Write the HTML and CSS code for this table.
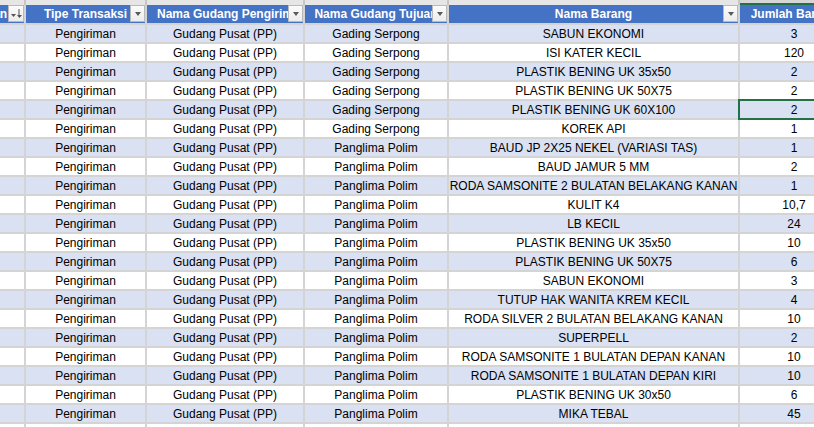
FILE: index.html
```html
<!DOCTYPE html>
<html>
<head>
<meta charset="utf-8">
<link rel="stylesheet" href="styles.css">
</head>
<body>
<div class="sheet">
  <div class="colhdr">
    <div></div><div></div><div></div><div></div><div></div><div class="sel"></div>
  </div>
  <div class="grid">
    <div class="th th-a"><span class="th-end">Tanggal Pengiriman</span>
      <span class="fbtn fbtn-sort"><svg width="14" height="15" viewBox="0 0 14 15"><path d="M2 8h5l-2.5 3z" fill="#555"/><path d="M10 3v8" stroke="#555" stroke-width="1"/><path d="M8 9h5l-2.5 3z" fill="#555"/></svg></span></div>
    <div class="th"><span>Tipe Transaksi</span><span class="fbtn"><i></i></span></div>
    <div class="th"><span>Nama Gudang Pengirim</span><span class="fbtn"><i></i></span></div>
    <div class="th"><span>Nama Gudang Tujuan</span><span class="fbtn"><i></i></span></div>
    <div class="th"><span>Nama Barang</span><span class="fbtn"><i></i></span></div>
    <div class="th"><span>Jumlah Barang</span><span class="fbtn"><i></i></span></div>

    <div class="c b"></div><div class="c b">Pengiriman</div><div class="c b">Gudang Pusat (PP)</div><div class="c b">Gading Serpong</div><div class="c b">SABUN EKONOMI</div><div class="c b">3</div>
    <div class="c"></div><div class="c">Pengiriman</div><div class="c">Gudang Pusat (PP)</div><div class="c">Gading Serpong</div><div class="c">ISI KATER KECIL</div><div class="c">120</div>
    <div class="c b"></div><div class="c b">Pengiriman</div><div class="c b">Gudang Pusat (PP)</div><div class="c b">Gading Serpong</div><div class="c b">PLASTIK BENING UK 35x50</div><div class="c b">2</div>
    <div class="c"></div><div class="c">Pengiriman</div><div class="c">Gudang Pusat (PP)</div><div class="c">Gading Serpong</div><div class="c">PLASTIK BENING UK 50X75</div><div class="c">2</div>
    <div class="c b"></div><div class="c b">Pengiriman</div><div class="c b">Gudang Pusat (PP)</div><div class="c b">Gading Serpong</div><div class="c b">PLASTIK BENING UK 60X100</div><div class="c b">2</div>
    <div class="c"></div><div class="c">Pengiriman</div><div class="c">Gudang Pusat (PP)</div><div class="c">Gading Serpong</div><div class="c">KOREK API</div><div class="c">1</div>
    <div class="c b"></div><div class="c b">Pengiriman</div><div class="c b">Gudang Pusat (PP)</div><div class="c b">Panglima Polim</div><div class="c b">BAUD JP 2X25 NEKEL (VARIASI TAS)</div><div class="c b">1</div>
    <div class="c"></div><div class="c">Pengiriman</div><div class="c">Gudang Pusat (PP)</div><div class="c">Panglima Polim</div><div class="c">BAUD JAMUR 5 MM</div><div class="c">2</div>
    <div class="c b"></div><div class="c b">Pengiriman</div><div class="c b">Gudang Pusat (PP)</div><div class="c b">Panglima Polim</div><div class="c b">RODA SAMSONITE 2 BULATAN BELAKANG KANAN</div><div class="c b">1</div>
    <div class="c"></div><div class="c">Pengiriman</div><div class="c">Gudang Pusat (PP)</div><div class="c">Panglima Polim</div><div class="c">KULIT K4</div><div class="c">10,7</div>
    <div class="c b"></div><div class="c b">Pengiriman</div><div class="c b">Gudang Pusat (PP)</div><div class="c b">Panglima Polim</div><div class="c b">LB KECIL</div><div class="c b">24</div>
    <div class="c"></div><div class="c">Pengiriman</div><div class="c">Gudang Pusat (PP)</div><div class="c">Panglima Polim</div><div class="c">PLASTIK BENING UK 35x50</div><div class="c">10</div>
    <div class="c b"></div><div class="c b">Pengiriman</div><div class="c b">Gudang Pusat (PP)</div><div class="c b">Panglima Polim</div><div class="c b">PLASTIK BENING UK 50X75</div><div class="c b">6</div>
    <div class="c"></div><div class="c">Pengiriman</div><div class="c">Gudang Pusat (PP)</div><div class="c">Panglima Polim</div><div class="c">SABUN EKONOMI</div><div class="c">3</div>
    <div class="c b"></div><div class="c b">Pengiriman</div><div class="c b">Gudang Pusat (PP)</div><div class="c b">Panglima Polim</div><div class="c b">TUTUP HAK WANITA KREM KECIL</div><div class="c b">4</div>
    <div class="c"></div><div class="c">Pengiriman</div><div class="c">Gudang Pusat (PP)</div><div class="c">Panglima Polim</div><div class="c">RODA SILVER 2 BULATAN BELAKANG KANAN</div><div class="c">10</div>
    <div class="c b"></div><div class="c b">Pengiriman</div><div class="c b">Gudang Pusat (PP)</div><div class="c b">Panglima Polim</div><div class="c b">SUPERPELL</div><div class="c b">2</div>
    <div class="c"></div><div class="c">Pengiriman</div><div class="c">Gudang Pusat (PP)</div><div class="c">Panglima Polim</div><div class="c">RODA SAMSONITE 1 BULATAN DEPAN KANAN</div><div class="c">10</div>
    <div class="c b"></div><div class="c b">Pengiriman</div><div class="c b">Gudang Pusat (PP)</div><div class="c b">Panglima Polim</div><div class="c b">RODA SAMSONITE 1 BULATAN DEPAN KIRI</div><div class="c b">10</div>
    <div class="c"></div><div class="c">Pengiriman</div><div class="c">Gudang Pusat (PP)</div><div class="c">Panglima Polim</div><div class="c">PLASTIK BENING UK 30x50</div><div class="c">6</div>
    <div class="c b"></div><div class="c b">Pengiriman</div><div class="c b">Gudang Pusat (PP)</div><div class="c b">Panglima Polim</div><div class="c b">MIKA TEBAL</div><div class="c b">45</div>
    <div class="c"></div><div class="c"></div><div class="c"></div><div class="c"></div><div class="c"></div><div class="c"></div>

    <div class="selbox"></div>
  </div>
</div>
</body>
</html>
```

FILE: styles.css
```css
html, body {
  margin: 0;
  padding: 0;
  background: #ffffff;
  overflow: hidden;
}
body {
  width: 814px;
  height: 427px;
  font-family: "Liberation Sans", Arial, sans-serif;
}
.sheet {
  width: 848px;
}
.colhdr {
  display: grid;
  grid-template-columns: 24px 119px 156px 142px 289px 108px;
  column-gap: 2px;
  height: 5px;
  background: #c6c6c6;
}
.colhdr div {
  background: #e6e6e6;
}
.colhdr .sel {
  background: #d6d6d6;
  border-bottom: 2px solid #217346;
}
.grid {
  position: relative;
  display: grid;
  grid-template-columns: 24px 119px 156px 142px 289px 108px;
  grid-template-rows: 18px;
  grid-auto-rows: 17px;
  gap: 2px;
  background: #d4d4d4;
}
.th {
  position: relative;
  background: #4472c4;
  color: #ffffff;
  font-weight: bold;
  font-size: 12px;
  line-height: 18px;
  white-space: nowrap;
  overflow: hidden;
  display: flex;
  justify-content: center;
}
.th-a {
  justify-content: flex-end;
  padding-right: 17px;
}
.th-end {
  flex: none;
}
.fbtn {
  position: absolute;
  right: 0;
  top: 0;
  width: 13px;
  height: 15px;
  background: linear-gradient(#fbfbfb, #ececec);
  border: 1px solid #b9b9b9;
  display: flex;
  align-items: center;
  justify-content: center;
}
.fbtn i {
  width: 0;
  height: 0;
  border-left: 3px solid transparent;
  border-right: 3px solid transparent;
  border-top: 4px solid #595959;
}
.fbtn-sort {
  width: 14px;
}
.c {
  background: #ffffff;
  color: #000000;
  font-size: 12px;
  line-height: 15px;
  padding-top: 2px;
  box-sizing: border-box;
  white-space: nowrap;
  overflow: hidden;
  display: flex;
  justify-content: center;
}
.c.b {
  background: #d9e1f2;
}
.selbox {
  position: absolute;
  left: 738px;
  top: 94px;
  width: 108px;
  height: 17px;
  border: 2px solid #217346;
}
```
